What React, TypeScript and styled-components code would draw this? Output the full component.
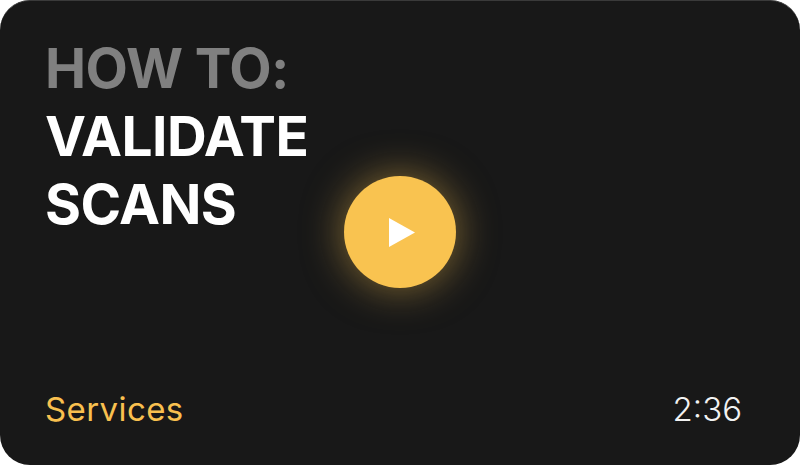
import React from 'react';
import styled, { createGlobalStyle } from 'styled-components';

const GlobalStyle = createGlobalStyle`
  html, body {
    margin: 0;
    padding: 0;
    background: #fff;
  }
`;

const Card = styled.div`
  position: relative;
  box-sizing: border-box;
  display: flex;
  flex-direction: column;
  justify-content: space-between;
  width: 800px;
  height: 465px;
  padding: 33px 58px 36px 45px;
  background-color: #181818;
  border-top: 1px solid #3a3a3a;
  border-radius: 30px;
  overflow: hidden;
  font-family: 'Inter', 'Liberation Sans', sans-serif;
`;

const Title = styled.div`
  font-size: 55px;
  line-height: 68px;
  font-weight: 700;
  letter-spacing: -0.6px;
`;

const TitleLine = styled.div<{ $muted?: boolean }>`
  color: ${(p) => (p.$muted ? '#808080' : '#ffffff')};
`;

const Footer = styled.div`
  display: flex;
  justify-content: space-between;
  align-items: center;
`;

const Category = styled.span`
  color: #f9c04f;
  font-size: 33px;
  font-weight: 400;
  letter-spacing: 0.4px;
`;

const Duration = styled.span`
  color: #f2f2f2;
  font-size: 33px;
  font-weight: 300;
`;

const PlayButton = styled.div`
  position: absolute;
  left: 344px;
  top: 175px;
  width: 112px;
  height: 112px;
  display: flex;
  align-items: center;
  justify-content: center;
  border-radius: 50%;
  background-color: #f9c350;
  box-shadow: 0 0 40px rgba(249, 195, 80, 0.5);
`;

const PlayIcon = styled.svg`
  width: 26px;
  height: 29px;
  margin-left: 3px;
  fill: #fff;
`;

export default function App() {
  return (
    <>
      <GlobalStyle />
      <Card>
        <Title>
          <TitleLine $muted>HOW TO:</TitleLine>
          <TitleLine>VALIDATE</TitleLine>
          <TitleLine>SCANS</TitleLine>
        </Title>
        <Footer>
          <Category>Services</Category>
          <Duration>2:36</Duration>
        </Footer>
        <PlayButton>
          <PlayIcon viewBox="0 0 26 29">
            <path d="M0 0 L26 14.5 L0 29 Z" />
          </PlayIcon>
        </PlayButton>
      </Card>
    </>
  );
}
